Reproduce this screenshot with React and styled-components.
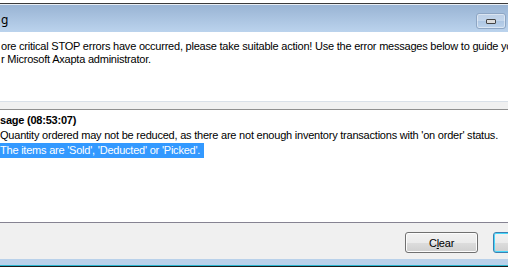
import React from 'react'
import styled, { createGlobalStyle } from 'styled-components'

const GlobalStyle = createGlobalStyle`
  html, body {
    margin: 0;
    padding: 0;
    background: #ffffff;
    overflow: hidden;
  }
  body {
    font-family: 'Liberation Sans', Arial, sans-serif;
    font-size: 11px;
    letter-spacing: -0.22px;
    color: #000000;
  }
`

const Window = styled.div`
  width: 508px;
  height: 267px;
  display: flex;
  flex-direction: column;
  overflow: hidden;
  background: #ffffff;
  padding-top: 3px;
  box-sizing: border-box;
`

const TitleBar = styled.div`
  flex-shrink: 0;
  height: 29px;
  box-sizing: border-box;
  border-top: 1px solid #3a3a3a;
  box-shadow: inset 0 1px 0 #e8eef5;
  padding-top: 1px;
  background: linear-gradient(#98b3d3, #bbd3ed);
  display: flex;
  align-items: center;
  justify-content: space-between;
  padding-right: 2px;
`

const Title = styled.span`
  font-family: 'Noto Sans', 'Open Sans', sans-serif;
  font-size: 12px;
  letter-spacing: 0;
  color: #000000;
  margin-top: 2px;
  padding-left: 1px;
`

const CaptionButton = styled.div`
  width: 28px;
  height: 14px;
  border: 1px solid #8ea6c4;
  border-radius: 3px;
  background: linear-gradient(#bccfe6, #c3d6ec 50%, #adc6e3 51%, #bdd3ec);
  box-shadow: inset 0 0 0 1px rgba(255, 255, 255, 0.45);
  display: flex;
  align-items: center;
  justify-content: center;
  margin-top: 4px;
`

const MinGlyph = styled.div`
  width: 8px;
  height: 3px;
  border: 1px solid #444444;
  border-radius: 1px;
  background: #dcdcdc;
  margin-top: 2px;
`

const Intro = styled.div`
  flex-shrink: 0;
  height: 69px;
  padding-top: 8px;
  box-sizing: border-box;
  line-height: 13px;
`

const Line = styled.div`
  white-space: nowrap;
  overflow: hidden;
  padding-left: 1px;
`

const Splitter = styled.div`
  flex-shrink: 0;
  height: 7px;
  border-top: 1px solid #d9e0e8;
  border-bottom: 1px solid #8f8f8f;
  background: #f0f0f0;
`

const Messages = styled.div`
  flex: 1;
  min-height: 0;
  padding-top: 3px;
  line-height: 15px;
`

const MessageRow = styled.div`
  white-space: nowrap;
  overflow: hidden;
  font-weight: ${(p) => (p.bold ? 'bold' : 'normal')};
`

const Selected = styled.span`
  background: #3399ff;
  color: #ffffff;
  display: inline-block;
  padding-right: 4px;
`

const Footer = styled.div`
  flex-shrink: 0;
  height: 37px;
  box-sizing: border-box;
  border-top: 1px solid #868392;
  background: #f0f0f0;
  display: flex;
  align-items: flex-start;
  justify-content: flex-end;
  padding-top: 9px;
`

const ButtonRow = styled.div`
  display: flex;
  gap: 15px;
  margin-right: -58px;
`

const Button = styled.div`
  width: 71px;
  height: 19px;
  border: 1px solid ${(p) => (p.focused ? '#3c7fb1' : '#707070')};
  border-radius: 3px;
  background: linear-gradient(#f2f2f2, #ebebeb 50%, #dddddd 51%, #cfcfcf);
  box-shadow: ${(p) => (p.focused ? 'inset 0 0 0 1px #48d8fb' : 'inset 0 0 0 1px #fcfcfc')};
  display: flex;
  align-items: center;
  justify-content: center;
  font-size: 11px;
`

const Mnemonic = styled.span`
  text-decoration: underline;
`

const BottomEdge = styled.div`
  flex-shrink: 0;
  height: 6px;
  background: #b9d1ea;
  border-bottom: 1px solid #2bb6d0;
  box-shadow: 0 1px 0 #1a1a1a;
  margin-bottom: 1px;
`

const App = () => {
  return (
    <>
      <GlobalStyle />
      <Window>
        <TitleBar>
          <Title>g</Title>
          <CaptionButton>
            <MinGlyph />
          </CaptionButton>
        </TitleBar>
        <Intro>
          <Line>
            ore critical STOP errors have occurred, please take suitable action! Use the error messages below to guide you
          </Line>
          <Line>r Microsoft Axapta administrator.</Line>
        </Intro>
        <Splitter />
        <Messages>
          <MessageRow bold>sage (08:53:07)</MessageRow>
          <MessageRow>
            Quantity ordered may not be reduced, as there are not enough inventory transactions with 'on order' status.
          </MessageRow>
          <MessageRow>
            <Selected>The items are 'Sold', 'Deducted' or 'Picked'.</Selected>
          </MessageRow>
        </Messages>
        <Footer>
          <ButtonRow>
            <Button>
              C<Mnemonic>l</Mnemonic>ear
            </Button>
            <Button focused />
          </ButtonRow>
        </Footer>
        <BottomEdge />
      </Window>
    </>
  )
}

export default App
